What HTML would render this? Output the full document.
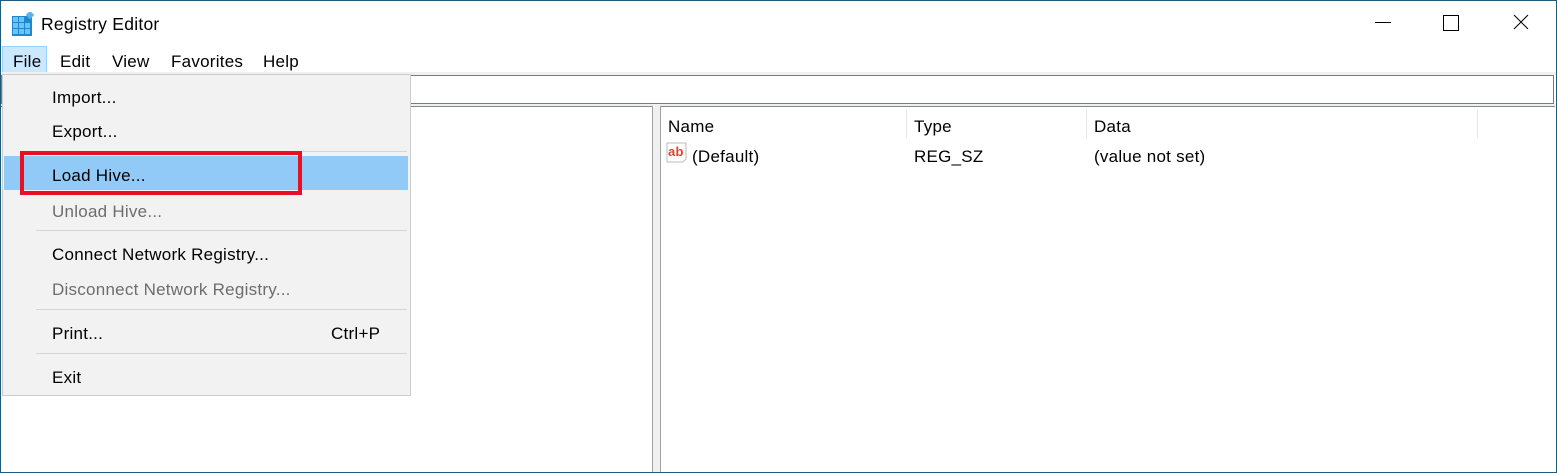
<!DOCTYPE html>
<html><head><style>
body{margin:0;width:1557px;height:473px;position:relative;overflow:hidden;font-family:"Liberation Sans",sans-serif;font-size:17px;letter-spacing:0.25px;color:#000;background:#fff}
.a{position:absolute}
.win{left:0;top:0;width:1555px;height:471px;border:1px solid #1f5a78;background:#fff}
.mi{position:absolute;left:52px}
.sep{position:absolute;left:36px;width:371px;height:1px;background:#d6d6d6}
</style></head><body>
<div class="a win"></div>
<svg class="a" style="left:12px;top:12px" width="24" height="24" viewBox="0 0 24 24">
<rect x="0" y="4" width="20" height="20" fill="#1e88d0"/>
<g fill="#6cc4f4"><rect x="1" y="5" width="5" height="5"/><rect x="7" y="5" width="5" height="5"/><rect x="1" y="11" width="5" height="5"/><rect x="7" y="11" width="5" height="5"/><rect x="13" y="11" width="5" height="5"/><rect x="1" y="17" width="5" height="5"/><rect x="7" y="17" width="5" height="5"/><rect x="13" y="17" width="5" height="5"/></g>
<rect x="15" y="0" width="6" height="6" transform="rotate(45 18 3)" fill="#5ab4e8"/>
</svg>
<div class="a" style="left:41px;top:14px;font-size:17.5px">Registry Editor</div>
<div class="a" style="left:1375px;top:22px;width:16px;height:1px;background:#000"></div>
<div class="a" style="left:1443px;top:15px;width:14px;height:14px;border:1px solid #000"></div>
<svg class="a" style="left:1513px;top:14px" width="16" height="16"><path d="M1 1L15 15M15 1L1 15" stroke="#000" stroke-width="1"/></svg>
<div class="a" style="left:2px;top:46px;width:45px;height:27px;background:#cce8ff;border:1px solid #99d1ff;box-sizing:border-box"></div>
<div class="a" style="left:13px;top:52px">File</div>
<div class="a" style="left:60px;top:52px">Edit</div>
<div class="a" style="left:112px;top:52px">View</div>
<div class="a" style="left:171px;top:52px">Favorites</div>
<div class="a" style="left:263px;top:52px">Help</div>
<div class="a" style="left:1px;top:72px;width:1555px;height:3px;background:#f0f0f0"></div>
<div class="a" style="left:1px;top:75px;width:1553px;height:29px;border:1px solid #7a7a7a;background:#fff;box-sizing:border-box"></div>
<div class="a" style="left:1px;top:104px;width:1555px;height:2px;background:#f0f0f0"></div>
<div class="a" style="left:1px;top:106px;width:652px;height:366px;border-top:1px solid #828790"></div>
<div class="a" style="left:652px;top:106px;width:9px;height:366px;background:#f0f0f0;border-left:1px solid #a0a0a0;border-right:1px solid #a0a0a0;box-sizing:border-box"></div>
<div class="a" style="left:661px;top:106px;width:894px;height:1px;background:#828790"></div>
<div class="a" style="left:906px;top:110px;width:1px;height:28px;background:#e5e5e5"></div>
<div class="a" style="left:1086px;top:110px;width:1px;height:28px;background:#e5e5e5"></div>
<div class="a" style="left:1477px;top:110px;width:1px;height:28px;background:#e5e5e5"></div>
<div class="a" style="left:668px;top:117px">Name</div>
<div class="a" style="left:914px;top:117px">Type</div>
<div class="a" style="left:1094px;top:117px">Data</div>
<svg class="a" style="left:666px;top:142px" width="24" height="22"><path d="M1 1h19v16l-3 3H1z" fill="#fff" stroke="#bbb"/><text x="2" y="14" font-family="Liberation Sans" font-weight="bold" font-size="13" fill="#d9482b">ab</text></svg>
<div class="a" style="left:692px;top:147px">(Default)</div>
<div class="a" style="left:914px;top:147px">REG_SZ</div>
<div class="a" style="left:1094px;top:147px">(value not set)</div>
<div class="a" style="left:2px;top:74px;width:409px;height:322px;background:#f2f2f2;border:1px solid #ccc;box-sizing:border-box"></div>
<div class="a" style="left:4px;top:156px;width:404px;height:34px;background:#91c9f7"></div>
<div class="mi" style="top:88px">Import...</div>
<div class="mi" style="top:122px">Export...</div>
<div class="sep" style="top:151px"></div>
<div class="mi" style="top:166px">Load Hive...</div>
<div class="mi" style="top:202px;color:#6d6d6d">Unload Hive...</div>
<div class="sep" style="top:230px"></div>
<div class="mi" style="top:245px">Connect Network Registry...</div>
<div class="mi" style="top:280px;color:#6d6d6d">Disconnect Network Registry...</div>
<div class="sep" style="top:309px"></div>
<div class="mi" style="top:324px">Print...</div>
<div class="a" style="left:331px;top:324px">Ctrl+P</div>
<div class="sep" style="top:353px"></div>
<div class="mi" style="top:368px">Exit</div>
<div class="a" style="left:20px;top:151px;width:282px;height:44px;border:4px solid #e81123;box-sizing:border-box"></div>
</body></html>
